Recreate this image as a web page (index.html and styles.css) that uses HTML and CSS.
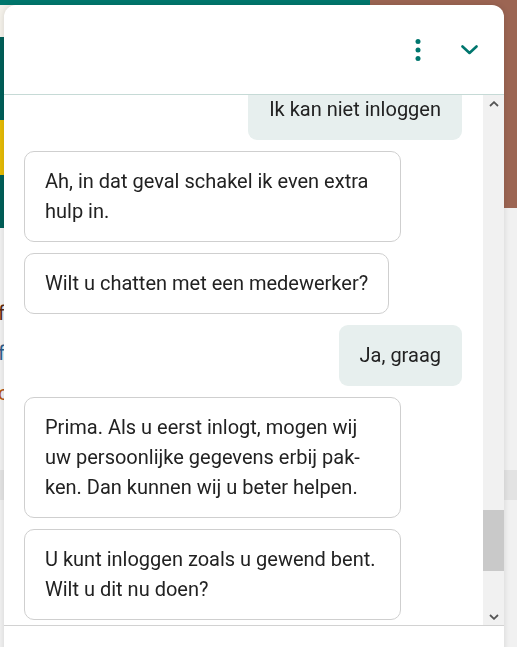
FILE: index.html
```html
<!DOCTYPE html>
<html lang="nl">
<head>
<meta charset="utf-8">
<title>Chat</title>
<link rel="stylesheet" href="styles.css">
</head>
<body>
<div class="page">
  <div class="hero">
    <div class="hero-left">
      <div class="topline"></div>
      <div class="nav"></div>
      <div class="band teal"></div>
      <div class="band yellow"></div>
      <div class="band teal small"></div>
    </div>
    <div class="hero-right"></div>
  </div>
  <div class="content">
    <p class="line l1">f</p>
    <p class="line l2">f</p>
    <p class="line l3">c</p>
  </div>
  <div class="strip"></div>
</div>

<div class="widget">
  <div class="w-header">
    <button class="icon-btn" aria-label="Menu">
      <svg width="6" height="24" viewBox="0 0 6 24"><circle cx="3" cy="3.5" r="2.5" fill="#00766e"/><circle cx="3" cy="12" r="2.5" fill="#00766e"/><circle cx="3" cy="20.5" r="2.5" fill="#00766e"/></svg>
    </button>
    <button class="icon-btn" aria-label="Minimaliseren">
      <svg width="17" height="10" viewBox="0 0 17 10"><path d="M1.5 1.5 L8.5 8 L15.5 1.5" fill="none" stroke="#00766e" stroke-width="2.6" stroke-linecap="round" stroke-linejoin="round"/></svg>
    </button>
  </div>
  <div class="w-body">
    <div class="messages">
      <div class="msg user">Ik kan niet inloggen</div>
      <div class="msg bot">Ah, in dat geval schakel ik even extra hulp in.</div>
      <div class="msg bot">Wilt u chatten met een medewerker?</div>
      <div class="msg user">Ja, graag</div>
      <div class="msg bot">Prima. Als u eerst inlogt, mogen wij uw persoonlijke gegevens erbij pak&shy;ken. Dan kunnen wij u beter helpen.</div>
      <div class="msg bot">U kunt inloggen zoals u gewend bent. Wilt u dit nu doen?</div>
    </div>
    <div class="scrollbar">
      <div class="sb-btn">
        <svg width="10" height="6" viewBox="0 0 10 6"><path d="M1 5 L5 1.2 L9 5" fill="none" stroke="#555" stroke-width="1.8"/></svg>
      </div>
      <div class="sb-track">
        <div class="sb-thumb" style="margin-top:398px"></div>
      </div>
      <div class="sb-btn">
        <svg width="10" height="6" viewBox="0 0 10 6"><path d="M1 1 L5 4.8 L9 1" fill="none" stroke="#555" stroke-width="1.8"/></svg>
      </div>
    </div>
  </div>
  <div class="w-footer"></div>
</div>
</body>
</html>
```

FILE: styles.css
```css
* { box-sizing: border-box; }
html, body { margin: 0; padding: 0; }
body {
  width: 517px;
  height: 647px;
  overflow: hidden;
  font-family: Roboto, "Liberation Sans", Arial, sans-serif;
  background: #f1f1f1;
}

.page { width: 517px; height: 647px; }
.hero { display: flex; height: 228px; }
.hero-left { width: 370px; display: flex; flex-direction: column; }
.topline { height: 5px; background: #00776d; }
.nav { height: 32px; background: #f4f1ea; }
.band { width: 100%; }
.band.teal { height: 83px; background: #005f59; }
.band.yellow { height: 55px; background: #e5bb06; }
.band.teal.small { height: 53px; }
.hero-right { flex: 1; height: 208px; background: #9c6553; }

.content { height: 242px; padding-top: 75px; background: #f1f1f1; }
.line {
  margin: 0 0 20px -2px;
  font-size: 20px;
  line-height: 20px;
  height: 20px;
}
.l1 { color: #5a2a12; }
.l2 { color: #2d5d8a; }
.l3 { color: #b5530f; }
.strip { height: 30px; background: #e3e3e3; }

.widget {
  position: fixed;
  left: 4px;
  top: 5px;
  width: 500px;
  height: 660px;
  background: #fff;
  border-radius: 12px 12px 0 0;
  box-shadow: 0 0 6px rgba(0,0,0,0.12);
  display: flex;
  flex-direction: column;
  overflow: hidden;
}

.w-header {
  height: 90px;
  flex: none;
  border-bottom: 1px solid #c6dad6;
  display: flex;
  align-items: center;
  justify-content: flex-end;
  gap: 33px;
  padding: 0 26px 0 0;
}
.icon-btn {
  border: 0;
  background: none;
  padding: 0;
  margin: 0;
  display: flex;
  align-items: center;
  justify-content: center;
  width: 18px;
  height: 30px;
  cursor: pointer;
}

.w-body {
  height: 530px;
  flex: none;
  display: flex;
}
.messages {
  flex: 1;
  display: flex;
  flex-direction: column;
  justify-content: flex-end;
  gap: 11px;
  padding: 0 21px 5px 20px;
  overflow: hidden;
}
.msg {
  flex: none;
  font-size: 20px;
  line-height: 30px;
  color: #222;
  max-width: 377px;
}
.msg.bot {
  align-self: flex-start;
  background: #fff;
  border: 1px solid #cfcfcf;
  border-radius: 10px;
  padding: 14px 20px 15px 20px;
}
.msg.user {
  align-self: flex-end;
  background: #e7efee;
  border-radius: 9px;
  padding: 15px 21px 16px 21px;
}

.scrollbar {
  width: 21px;
  flex: none;
  background: #f1f1f1;
  display: flex;
  flex-direction: column;
}
.sb-btn {
  height: 17px;
  flex: none;
  display: flex;
  align-items: center;
  justify-content: center;
}
.sb-track { flex: 1; }
.sb-thumb { height: 61px; background: #c9c9c9; }

.w-footer {
  flex: 1;
  border-top: 1px solid #d2d2d2;
  background: #fff;
}
```
